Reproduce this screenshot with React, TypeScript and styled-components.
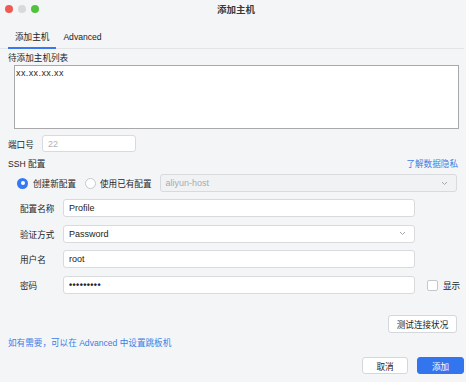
import React from "react";
import styled, { createGlobalStyle } from "styled-components";

const Global = createGlobalStyle`
  html, body { margin: 0; padding: 0; background: #ffffff; }
  body { font-family: "Liberation Sans", "Noto Sans CJK SC", sans-serif; color: #1f1f1f; }
  * { box-sizing: border-box; }
`;

const Window = styled.div`
  width: 466px;
  height: 382px;
  background: #f4f5f7;
  font-size: 8.6px;
  overflow: hidden;
`;

const TitleBar = styled.div`
  height: 18px;
  display: grid;
  grid-template-columns: 1fr auto 1fr;
  align-items: center;
`;

const Lights = styled.div`
  display: flex;
  gap: 5px;
  padding-left: 5px;
`;

const Light = styled.span<{ $c: string }>`
  width: 8px;
  height: 8px;
  border-radius: 50%;
  background: ${(p) => p.$c};
`;

const Title = styled.div`
  font-size: 9.5px;
  font-weight: 700;
  color: #3a3a3a;
  padding-left: 6px;
`;

const TabBar = styled.div`
  margin-top: 10px;
  display: flex;
  padding-left: 8px;
  border-bottom: 1px solid #e3e4e7;
  margin-right: 2px;
  height: 21px;
`;

const Tab = styled.div<{ $active?: boolean }>`
  padding: 0 7px;
  line-height: 18px;
  color: #222;
  border-bottom: 2px solid ${(p) => (p.$active ? "#3a78f2" : "transparent")};
  margin-bottom: -1px;
`;

const Body = styled.div`
  display: flex;
  flex-direction: column;
  padding: 0 8px;
  & > * { flex: none; }
`;

const SectionLabel = styled.div`
  margin-top: 3px;
  line-height: 12px;
  height: 12px;
`;

const HostsArea = styled.div`
  margin-left: 6px;
  margin-top: 1px;
  width: 445px;
  height: 64px;
  background: #fff;
  border: 1px solid #a9a9ab;
  padding: 1px 1px;
  line-height: 12px;
  letter-spacing: 0.4px;
  font-size: 9px;
`;

const PortRow = styled.div`
  margin-top: 6px;
  display: flex;
  align-items: center;
  height: 17px;
`;

const PortLabel = styled.div`
  width: 34px;
`;

const Field = styled.div<{ $w?: number; $disabled?: boolean; $h?: number }>`
  width: ${(p) => (p.$w ? `${p.$w}px` : "auto")};
  flex: ${(p) => (p.$w ? "none" : "1")};
  height: ${(p) => p.$h ?? 18}px;
  background: ${(p) => (p.$disabled ? "#f1f2f4" : "#ffffff")};
  border: 1px solid #d9dadd;
  border-radius: 3px;
  display: flex;
  align-items: center;
  justify-content: space-between;
  padding: 0 8px 0 5px;
  font-size: 9px;
  color: ${(p) => (p.$disabled ? "#a9abb0" : "#222")};
`;

const Placeholder = styled.span`
  color: #b0b2b6;
`;

const HeaderRow = styled.div`
  margin-top: 6px;
  display: flex;
  justify-content: space-between;
  line-height: 12px;
  height: 12px;
`;

const Link = styled.span`
  color: #3b7ee6;
`;

const RadioRow = styled.div`
  margin-top: 4px;
  height: 18px;
  display: flex;
  align-items: center;
  padding-left: 9px;
  padding-right: 1px;
  white-space: nowrap;
`;

const Radio = styled.span<{ $checked?: boolean }>`
  width: 11px;
  height: 11px;
  border-radius: 50%;
  flex: none;
  background: ${(p) => (p.$checked ? "#3478f6" : "#fff")};
  border: ${(p) => (p.$checked ? "none" : "1px solid #c8c9cc")};
  display: flex;
  align-items: center;
  justify-content: center;
  &::after {
    content: "";
    width: 4px;
    height: 4px;
    border-radius: 50%;
    background: #fff;
    display: ${(p) => (p.$checked ? "block" : "none")};
  }
`;

const RadioText = styled.span<{ $gap: number; $after: number }>`
  margin-left: ${(p) => p.$gap}px;
  margin-right: ${(p) => p.$after}px;
`;

const Rows = styled.div`
  margin-top: 7px;
  display: flex;
  flex-direction: column;
  gap: 7.7px;
`;

const FormRow = styled.div`
  display: flex;
  align-items: center;
  padding-left: 12px;
  height: 18px;
  white-space: nowrap;
`;

const RowLabel = styled.div`
  width: 43px;
  flex: none;
`;

const Check = styled.span`
  margin-left: 12px;
  width: 11px;
  height: 11px;
  flex: none;
  border: 1px solid #c6c7ca;
  border-radius: 2px;
  background: #fff;
`;

const CheckText = styled.span`
  margin-left: 5px;
`;

const Dots = styled.span`
  letter-spacing: 0.4px;
  font-weight: 700;
`;

const TestRow = styled.div`
  margin-top: 21px;
  display: flex;
  justify-content: flex-end;
  padding-right: 1px;
`;

const Button = styled.button<{ $primary?: boolean; $w: number; $h?: number }>`
  width: ${(p) => p.$w}px;
  height: ${(p) => p.$h ?? 18}px;
  border-radius: 3px;
  font-family: inherit;
  font-size: 8.6px;
  padding: 0;
  border: 1px solid ${(p) => (p.$primary ? "#3275ee" : "#d6d7da")};
  background: ${(p) => (p.$primary ? "#3275ee" : "#ffffff")};
  color: ${(p) => (p.$primary ? "#ffffff" : "#222")};
`;

const Hint = styled.div`
  margin-top: 4px;
  line-height: 12px;
  height: 12px;
`;

const Footer = styled.div`
  margin-top: 8px;
  margin-right: -6px;
  display: flex;
  justify-content: flex-end;
  gap: 9px;
`;

const Chevron = () => (
  <svg width="7" height="5" viewBox="0 0 7 5">
    <path d="M1 1 L3.5 3.5 L6 1" fill="none" stroke="#9a9ca0" strokeWidth="0.9" />
  </svg>
);

export default function App() {
  return (
    <>
      <Global />
      <Window>
        <TitleBar>
          <Lights>
            <Light $c="#ee5b54" />
            <Light $c="#d8d9db" />
            <Light $c="#52c13d" />
          </Lights>
          <Title>添加主机</Title>
          <div />
        </TitleBar>
        <TabBar>
          <Tab $active>添加主机</Tab>
          <Tab>Advanced</Tab>
        </TabBar>
        <Body>
          <SectionLabel>待添加主机列表</SectionLabel>
          <HostsArea>xx.xx.xx.xx</HostsArea>
          <PortRow>
            <PortLabel>端口号</PortLabel>
            <Field $w={94} $h={17}>
              <Placeholder>22</Placeholder>
            </Field>
          </PortRow>
          <HeaderRow>
            <span>SSH 配置</span>
            <Link>了解数据隐私</Link>
          </HeaderRow>
          <RadioRow>
            <Radio $checked />
            <RadioText $gap={5} $after={9}>创建新配置</RadioText>
            <Radio />
            <RadioText $gap={4} $after={8}>使用已有配置</RadioText>
            <Field $disabled>
              <span>aliyun-host</span>
              <Chevron />
            </Field>
          </RadioRow>
          <Rows>
            <FormRow>
              <RowLabel>配置名称</RowLabel>
              <Field $w={352}>Profile</Field>
            </FormRow>
            <FormRow>
              <RowLabel>验证方式</RowLabel>
              <Field $w={352}>
                <span>Password</span>
                <Chevron />
              </Field>
            </FormRow>
            <FormRow>
              <RowLabel>用户名</RowLabel>
              <Field $w={352}>root</Field>
            </FormRow>
            <FormRow>
              <RowLabel>密码</RowLabel>
              <Field $w={352}>
                <Dots>•••••••••</Dots>
              </Field>
              <Check />
              <CheckText>显示</CheckText>
            </FormRow>
          </Rows>
          <TestRow>
            <Button $w={69}>测试连接状况</Button>
          </TestRow>
          <Hint>
            <Link>如有需要，可以在 Advanced 中设置跳板机</Link>
          </Hint>
          <Footer>
            <Button $w={46} $h={17}>取消</Button>
            <Button $w={47} $h={17} $primary>添加</Button>
          </Footer>
        </Body>
      </Window>
    </>
  );
}
